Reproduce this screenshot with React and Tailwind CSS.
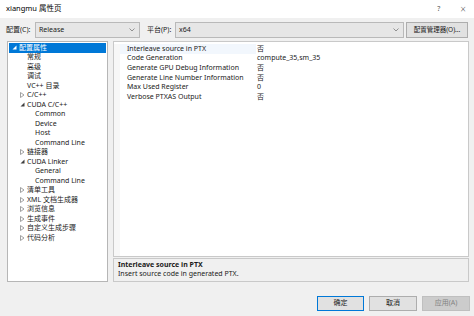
import React from "react";

const tree = [
  { label: "配置属性", level: 0, icon: "open", selected: true },
  { label: "常规", level: 1 },
  { label: "高级", level: 1 },
  { label: "调试", level: 1 },
  { label: "VC++ 目录", level: 1 },
  { label: "C/C++", level: 1, icon: "closed" },
  { label: "CUDA C/C++", level: 1, icon: "open" },
  { label: "Common", level: 2 },
  { label: "Device", level: 2 },
  { label: "Host", level: 2 },
  { label: "Command Line", level: 2 },
  { label: "链接器", level: 1, icon: "closed" },
  { label: "CUDA Linker", level: 1, icon: "open" },
  { label: "General", level: 2 },
  { label: "Command Line", level: 2 },
  { label: "清单工具", level: 1, icon: "closed" },
  { label: "XML 文档生成器", level: 1, icon: "closed" },
  { label: "浏览信息", level: 1, icon: "closed" },
  { label: "生成事件", level: 1, icon: "closed" },
  { label: "自定义生成步骤", level: 1, icon: "closed" },
  { label: "代码分析", level: 1, icon: "closed" },
];

const props = [
  ["Interleave source in PTX", "否"],
  ["Code Generation", "compute_35,sm_35"],
  ["Generate GPU Debug Information", "否"],
  ["Generate Line Number Information", "否"],
  ["Max Used Register", "0"],
  ["Verbose PTXAS Output", "否"],
];

function Expander({ kind, light }) {
  if (kind === "open") {
    return (
      <svg width="5" height="5" viewBox="0 0 5 5">
        <path d="M4.5 0.5 L4.5 4.5 L0.5 4.5 Z" fill={light ? "#ffffff" : "#404040"} />
      </svg>
    );
  }
  return (
    <svg width="5" height="6" viewBox="0 0 5 6">
      <path d="M0.5 0.5 L4 3 L0.5 5.5 Z" fill="none" stroke="#8a8a8a" strokeWidth="0.8" />
    </svg>
  );
}

function Chevron() {
  return (
    <svg width="6" height="4" viewBox="0 0 6 4">
      <path d="M0.5 0.5 L3 3 L5.5 0.5" fill="none" stroke="#7a7a7a" strokeWidth="0.8" />
    </svg>
  );
}

export default function App() {
  return (
    <div
      className="w-[474px] h-[316px] bg-[#f0f0f0] flex flex-col text-[7px] text-[#1a1a1a] overflow-hidden"
      style={{ fontFamily: '"Noto Sans", "Noto Sans CJK SC", sans-serif' }}
    >
      {/* title bar */}
      <div className="h-[18px] bg-white flex items-center pl-[6px] pr-[8px] shrink-0">
        <span className="text-[7.5px] text-black">xiangmu 属性页</span>
        <span className="ml-auto text-[7px] text-[#555]">?</span>
        <span className="ml-[20px] text-[10px] leading-none text-[#555] font-light">×</span>
      </div>

      {/* config row */}
      <div className="h-[16px] mt-[4px] flex items-center pl-[6px] shrink-0">
        <span className="w-[29px]">配置(C):</span>
        <div className="w-[105px] h-[16px] border border-[#b9b9b9] bg-[#e6e6e6] flex items-center pl-[3px] pr-[4px]">
          <span>Release</span>
          <span className="ml-auto flex"><Chevron /></span>
        </div>
        <span className="ml-[7px] w-[28px]">平台(P):</span>
        <div className="w-[229px] h-[16px] border border-[#b9b9b9] bg-[#e6e6e6] flex items-center pl-[3px] pr-[4px]">
          <span>x64</span>
          <span className="ml-auto flex"><Chevron /></span>
        </div>
        <div className="ml-[2px] w-[62px] h-[16px] border border-[#adadad] bg-[#e1e1e1] flex items-center justify-center text-[6.5px]">
          配置管理器(O)...
        </div>
      </div>

      {/* main */}
      <div className="mt-[3px] h-[241px] flex pl-[7px] shrink-0">
        <div className="w-[101px] h-full border border-[#b6b6b6] bg-white pt-[1px] px-[1px]">
          {tree.map((t, i) => (
            <div
              key={i}
              className={`h-[9.5px] flex items-center ${t.selected ? "bg-[#0078d7] text-white" : ""}`}
              style={{ paddingLeft: t.level === 0 ? 3 : t.level === 1 ? 11 : 26 }}
            >
              {t.level < 2 && (
                <span className="w-[7px] flex items-center shrink-0">
                  {t.icon && <Expander kind={t.icon} light={t.selected} />}
                </span>
              )}
              <span className={t.level === 1 && !t.icon ? "" : ""} style={{ marginLeft: t.level === 1 ? 0 : 0 }}>
                {t.label}
              </span>
            </div>
          ))}
        </div>

        <div className="ml-[5px] w-[356px] h-full flex flex-col">
          <div className="flex-1 border border-[#c9c9c9] bg-white pt-[2px] flex">
            <div className="w-[6px] bg-[#f7f7f7]" />
            <div className="flex-1">
              {props.map(([k, v], i) => (
                <div key={i} className="h-[9.7px] flex items-center">
                  <div className={`w-[136px] h-full flex items-center pl-[7px] ${i === 0 ? "bg-[#f2f7fd]" : ""}`}>
                    {k}
                  </div>
                  <div className="pl-[1px]">{v}</div>
                </div>
              ))}
            </div>
          </div>
          <div className="mt-[1px] h-[24px] border border-[#c9c9c9] bg-[#f0f0f0] pl-[4px] pt-[1px] leading-[9px]">
            <div className="font-bold">Interleave source in PTX</div>
            <div>Insert source code in generated PTX.</div>
          </div>
        </div>
      </div>

      {/* buttons */}
      <div className="mt-[14px] flex justify-end pr-[4px] gap-[5px]">
        <div className="w-[47px] h-[15px] border border-[#0078d7] bg-[#e1e1e1] flex items-center justify-center">
          确定
        </div>
        <div className="w-[48px] h-[15px] border border-[#adadad] bg-[#e1e1e1] flex items-center justify-center">
          取消
        </div>
        <div className="w-[48px] h-[15px] border border-[#bfbfbf] bg-[#cccccc] text-[#838383] flex items-center justify-center">
          应用(A)
        </div>
      </div>
    </div>
  );
}
